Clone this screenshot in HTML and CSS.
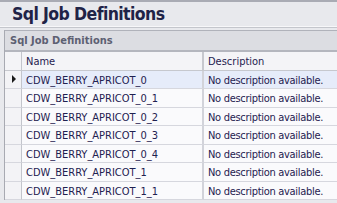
FILE: index.html
```html
<!DOCTYPE html>
<html>
<head>
<meta charset="utf-8">
<link rel="stylesheet" href="styles.css">
</head>
<body>
<div class="page">
  <div class="title-bar">Sql Job Definitions</div>
  <div class="panel">
    <div class="panel-header">Sql Job Definitions</div>
    <div class="grid">
      <div class="cell sel head"></div>
      <div class="cell name head">Name</div>
      <div class="cell desc head">Description</div>

      <div class="cell sel active"><span class="arrow"></span></div>
      <div class="cell name active">CDW_BERRY_APRICOT_0</div>
      <div class="cell desc active">No description available.</div>

      <div class="cell sel"></div>
      <div class="cell name">CDW_BERRY_APRICOT_0_1</div>
      <div class="cell desc">No description available.</div>

      <div class="cell sel"></div>
      <div class="cell name">CDW_BERRY_APRICOT_0_2</div>
      <div class="cell desc">No description available.</div>

      <div class="cell sel"></div>
      <div class="cell name">CDW_BERRY_APRICOT_0_3</div>
      <div class="cell desc">No description available.</div>

      <div class="cell sel"></div>
      <div class="cell name">CDW_BERRY_APRICOT_0_4</div>
      <div class="cell desc">No description available.</div>

      <div class="cell sel"></div>
      <div class="cell name">CDW_BERRY_APRICOT_1</div>
      <div class="cell desc">No description available.</div>

      <div class="cell sel"></div>
      <div class="cell name">CDW_BERRY_APRICOT_1_1</div>
      <div class="cell desc">No description available.</div>
    </div>
  </div>
</div>
</body>
</html>
```
FILE: styles.css
```css
html, body {
  margin: 0;
  padding: 0;
  background: #e8e9ed;
  overflow: hidden;
}
.page {
  width: 337px;
  height: 203px;
  overflow: hidden;
  font-family: "DejaVu Sans Condensed", "DejaVu Sans", sans-serif;
}
.title-bar {
  height: 25px;
  border-top: 2px solid #a9abb4;
  border-bottom: 1px solid #c4c6cc;
  box-shadow: inset 0 -1px 0 #f7f7f9;
  padding-left: 12px;
  font: bold 17.5px/25px "DejaVu Sans Condensed", "DejaVu Sans", sans-serif;
  letter-spacing: -0.6px;
  color: #1f2347;
}
.panel {
  margin: 2px 0 0 4px;
  border-left: 1px solid #a8aab2;
  border-top: 1px solid #b0b2ba;
}
.panel-header {
  height: 19px;
  background: #dcdde2;
  border-bottom: 2px solid #b4b6be;
  padding-left: 5px;
  font: bold 11px/19px "DejaVu Sans Condensed", "DejaVu Sans", sans-serif;
  color: #5c6072;
}
.grid {
  display: grid;
  grid-template-columns: 17px 182px 1fr;
  grid-auto-rows: 18.5px;
  background: #fafafc;
}
.cell {
  box-sizing: border-box;
  border-bottom: 1px solid #d6d7de;
  font: 11px/19.5px "DejaVu Sans Condensed", "DejaVu Sans", sans-serif;
  color: #1f2150;
  padding-left: 4px;
  white-space: nowrap;
  overflow: hidden;
}
.cell.desc {
  letter-spacing: -0.3px;
}
.cell.sel {
  background: #f3f3f6;
  border-right: 1px solid #c3c5cc;
  padding: 0;
  display: flex;
  align-items: center;
  justify-content: center;
}
.cell.name {
  border-right: 2px solid #d2d3da;
}
.cell.head {
  background: #f4f4f7;
  border-bottom: 1px solid #c6c8ce;
}
.cell.name.head {
  border-right: 2px solid #c7c8ce;
}
.cell.desc.head {
  letter-spacing: 0;
}
.cell.active:not(.sel) {
  background: #e6ecfa;
}
.arrow {
  width: 0;
  height: 0;
  border-top: 4px solid transparent;
  border-bottom: 4px solid transparent;
  border-left: 4px solid #1a1a1a;
  margin-left: 1px;
}
```
